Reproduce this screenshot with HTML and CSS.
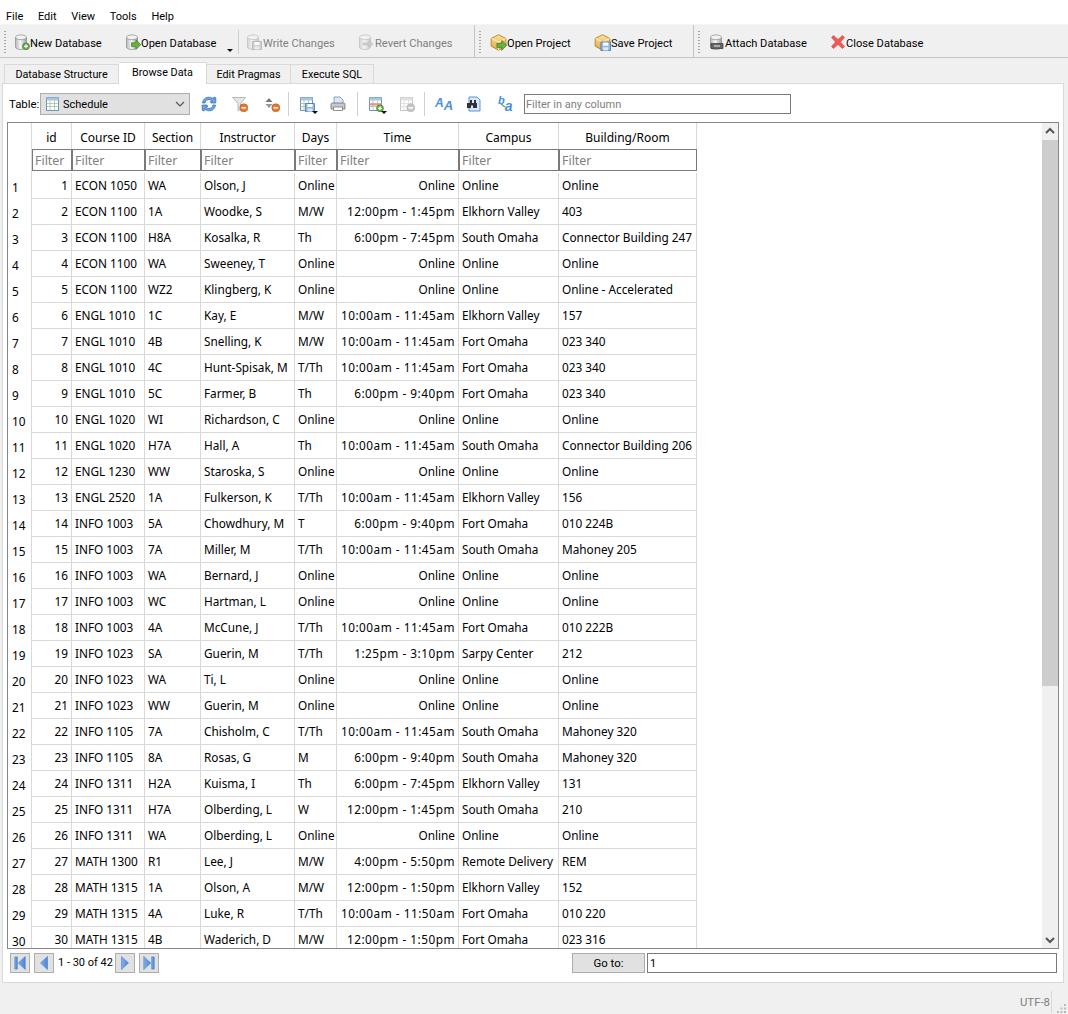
FILE: index.html
```html
<!DOCTYPE html>
<html lang="en">
<head>
    <meta charset="UTF-8">
    <meta name="viewport" content="width=device-width, initial-scale=1.0">
    <title>DB Browser for SQLite</title>
    <link rel="stylesheet" href="styles.css">
</head>
<body>
    <svg class="sprite" aria-hidden="true">
        <defs>
            <linearGradient id="gDb" x1="0" x2="1" y1="0" y2="0"><stop offset="0" stop-color="#b9b9b9"/><stop offset=".45" stop-color="#f7f7f7"/><stop offset="1" stop-color="#9c9c9c"/></linearGradient>
            <linearGradient id="gBox" x1="0" x2="0" y1="0" y2="1"><stop offset="0" stop-color="#fbe39a"/><stop offset="1" stop-color="#e2a93f"/></linearGradient>
            <linearGradient id="gBlue" x1="0" x2="1" y1="0" y2="0"><stop offset="0" stop-color="#7fb0ec"/><stop offset="1" stop-color="#4a86dc"/></linearGradient>
            <symbol id="db" viewBox="0 0 16 16">
                <path d="M1.500 3.500v9.500c0 1.400 2.500 2.500 5.500 2.500s5.500-1.100 5.500-2.500V3.500z" fill="url(#gDb)" stroke="#8a8a8a" stroke-width=".7"/>
                <ellipse cx="7" cy="3.300" rx="5.500" ry="2.400" fill="#f2f2f2" stroke="#8a8a8a" stroke-width=".7"/>
            </symbol>
            <symbol id="plus-badge" viewBox="0 0 16 16">
                <circle cx="12" cy="12.300" r="3.400" fill="#62ad3f" stroke="#3f7d28" stroke-width=".7"/>
                <path d="M10 12.300h4M12 10.300v4" stroke="#fff" stroke-width="1.200"/>
            </symbol>
            <symbol id="minus-badge" viewBox="0 0 16 16">
                <circle cx="11.800" cy="11.800" r="4" fill="#e8792b" stroke="#b9531a" stroke-width=".6"/>
                <path d="M9.500 11.800h4.600" stroke="#fff" stroke-width="1.500"/>
            </symbol>
            <symbol id="arrow-badge" viewBox="0 0 16 16">
                <path d="M6.500 8.800h4.500V6l4.800 4.600L11 15.400v-2.800H6.500z" fill="#69b23f" stroke="#3f7d28" stroke-width=".7"/>
            </symbol>
            <symbol id="floppy" viewBox="0 0 16 16">
                <path d="M6.500 7.500h9v8h-9z" fill="#8fb7e6" stroke="#4a76ad" stroke-width=".8"/>
                <path d="M8.500 8h5v3h-5z" fill="#fff"/>
                <path d="M8.500 12.500h5v3h-5z" fill="#dfe8f2"/>
            </symbol>
            <symbol id="cube" viewBox="0 0 17 17">
                <path d="M8.500 .8L15.800 4.400V12.200L8.500 16.200L1.200 12.200V4.400z" fill="url(#gBox)" stroke="#b98a35"/>
                <path d="M1.500 4.500L8.500 8l7-3.500M8.500 8v8" fill="none" stroke="#fff3c9" stroke-width=".9"/>
            </symbol>
            <symbol id="grid" viewBox="0 0 16 16">
                <path d="M1.500 1.500h12v13h-12z" fill="#fff" stroke="#6e8fb8"/>
                <path d="M1.500 1.500h12v3h-12z" fill="#a9c5e6"/>
                <path d="M5 4.500v10M9.500 4.500v10M1.500 7.500h12M1.500 10.500h12" stroke="#9fc39a" stroke-width=".8"/>
            </symbol>
            <symbol id="first" viewBox="0 0 16 18">
                <path d="M2 2h3v14H2z" fill="url(#gBlue)" stroke="#3f78c8" stroke-width=".6"/>
                <path d="M14 1.500v15L6 9z" fill="url(#gBlue)" stroke="#3f78c8" stroke-width=".6"/>
            </symbol>
            <symbol id="prev" viewBox="0 0 16 18">
                <path d="M12 1.500v15L4 9z" fill="url(#gBlue)" stroke="#3f78c8" stroke-width=".6"/>
            </symbol>
            <symbol id="next" viewBox="0 0 16 18">
                <path d="M4 1.500v15L12 9z" fill="url(#gBlue)" stroke="#3f78c8" stroke-width=".6"/>
            </symbol>
            <symbol id="last" viewBox="0 0 16 18">
                <path d="M11 2h3v14h-3z" fill="url(#gBlue)" stroke="#3f78c8" stroke-width=".6"/>
                <path d="M2 1.500v15L10 9z" fill="url(#gBlue)" stroke="#3f78c8" stroke-width=".6"/>
            </symbol>
        </defs>
    </svg>

    <div class="menubar">
        <span>File</span><span>Edit</span><span>View</span><span>Tools</span><span>Help</span>
    </div>

    <div class="toolbar">
        <div class="grip"></div>
        <div class="tool tool-new">
            <svg class="ico"><use href="#db"/><use href="#plus-badge"/></svg><span class="tool-text t-new">New Database</span>
        </div>
        <div class="tool tool-open">
            <svg class="ico"><use href="#db"/><use href="#arrow-badge"/></svg><span class="tool-text t-open">Open Database</span>
        </div>
        <div class="drop drop-open"></div>
        <div class="tb-sep tb-sep-thin"></div>
        <div class="tool tool-write off">
            <svg class="ico"><use href="#db"/><use href="#floppy"/></svg><span class="tool-text t-write">Write Changes</span>
        </div>
        <div class="tool tool-revert off">
            <svg class="ico"><use href="#db"/><path d="M5 9h6V7l4 3-4 3v-2H5z" fill="#aaa" stroke="#888" stroke-width=".6"/></svg><span class="tool-text t-revert">Revert Changes</span>
        </div>
        <div class="tb-sep tb-sep-a"></div>
        <div class="grip grip-b"></div>
        <div class="tool tool-oproj">
            <svg class="ico ico-17"><use href="#cube"/><use href="#arrow-badge"/></svg><span class="tool-text t-oproj">Open Project</span>
        </div>
        <div class="tool tool-sproj">
            <svg class="ico ico-17"><use href="#cube"/><use href="#floppy"/></svg><span class="tool-text t-sproj">Save Project</span>
        </div>
        <div class="tb-sep tb-sep-b"></div>
        <div class="grip grip-b"></div>
        <div class="tool tool-attach">
            <svg class="ico"><use href="#db"/><path d="M2 9.500h12v5H2z" fill="#666" stroke="#333" stroke-width=".7"/><path d="M5 11.500h6v1H5z" fill="#eee"/></svg><span class="tool-text t-attach">Attach Database</span>
        </div>
        <div class="tool tool-close">
            <svg class="ico" viewBox="0 0 16 16"><path d="M1.500 3.500l2-2L8 5.500l4.500-4 2 2L10.500 8l4 4.500-2 2L8 10.500l-4.500 4-2-2L5.500 8z" fill="#ee5a55" stroke="#d23f3a" stroke-width=".6"/></svg><span class="tool-text t-close">Close Database</span>
        </div>
    </div>

    <div class="tabs">
        <div class="tab tab-1">Database Structure</div>
        <div class="tab tab-active">Browse Data</div>
        <div class="tab tab-3">Edit Pragmas</div>
        <div class="tab tab-4">Execute SQL</div>
    </div>

    <div class="pane">
        <div class="table-bar">
            <span class="bar-label">Table:</span>
            <div class="combo">
                <svg class="ico combo-ico"><use href="#grid"/></svg>
                <span class="combo-text">Schedule</span>
                <svg class="combo-arrow" viewBox="0 0 10 6"><path d="M1 1l4 4 4-4" fill="none" stroke="#555" stroke-width="1.200"/></svg>
            </div>
            <svg class="ico b-refresh" viewBox="0 0 16 16"><path d="M1.500 7C2 3 4.800 1.200 8 1.200c2 0 3.700.8 4.800 2V1l2 .8V7h-4.800l-.7-1.700h2.200C11 4.200 9.700 3.500 8 3.500 5.800 3.500 4.400 4.800 4 7zM14.500 9c-.5 4-3.300 5.800-6.500 5.800-2 0-3.700-.8-4.800-2V15l-2-.8V9H6l.7 1.700H4.500C5.500 11.800 6.300 12.500 8 12.500c2.200 0 3.600-1.300 4-3.500z" fill="#6ea6de" stroke="#2a68ad" stroke-width=".7"/></svg>
            <svg class="ico b-filter" viewBox="0 0 16 16"><path d="M.5 1.500h13L8.500 7.500v6L6 15V7.500z" fill="#e6e6e6" stroke="#aaa" stroke-width=".8"/><use href="#minus-badge"/></svg>
            <svg class="ico b-sort" viewBox="0 0 16 16"><path d="M5 2l3.500 4h-7z" fill="#777"/><path d="M1.500 8h7L5 12z" fill="#999"/><use href="#minus-badge"/></svg>
            <div class="bar-sep sep-1"></div>
            <div class="ico-wrap b-save">
                <svg class="ico"><use href="#grid"/><use href="#floppy"/></svg>
                <div class="drop"></div>
            </div>
            <svg class="ico b-print" viewBox="0 0 16 16"><path d="M4 1h6l3 3v4H4z" fill="#dbe8f6" stroke="#6d92bd" stroke-width=".8"/><path d="M1 8.500c0-1 .5-1.500 1.500-1.500h11c1 0 1.500.5 1.500 1.500V13H1z" fill="#c9c9c9" stroke="#6c6c6c" stroke-width=".8"/><path d="M3.500 11h9v3.500h-9z" fill="#fff" stroke="#777" stroke-width=".8"/></svg>
            <div class="bar-sep sep-2"></div>
            <div class="ico-wrap b-add">
                <svg class="ico"><use href="#grid"/><path d="M1.500 7.500h12v2h-12z" fill="#ef8f8f"/><use href="#plus-badge"/></svg>
                <div class="drop"></div>
            </div>
            <svg class="ico b-del off"><use href="#grid"/><use href="#minus-badge"/></svg>
            <div class="bar-sep sep-3"></div>
            <svg class="ico b-font" viewBox="0 0 17 16"><text class="ico-letter" x="0" y="11" font-size="12">A<tspan dy="3" font-size="13">A</tspan></text></svg>
            <svg class="ico b-find" viewBox="0 0 16 16"><path d="M3 1h8l3 3v11H3z" fill="#d8e9fb" stroke="#4f8bcb" stroke-width=".9"/><path d="M1 7h3V4h2v3h2V4h2v3h1v5H7V9.500H5V12H1z" fill="#2f3238"/></svg>
            <svg class="ico b-repl" viewBox="0 0 16 16"><path d="M4 8l4 3" stroke="#5aa544" stroke-width="1.300"/><text class="ico-letter" x="1" y="8" font-size="11">b<tspan dy="7" font-size="14">a</tspan></text></svg>
            <input class="global-filter" type="text" placeholder="Filter in any column">
        </div>

        <div class="grid-frame">
            <div class="grid-view">
                <table class="grid">
                    <colgroup>
                        <col class="c-head"><col class="c-id"><col class="c-course"><col class="c-section"><col class="c-instr"><col class="c-days"><col class="c-time"><col class="c-campus"><col class="c-room">
                    </colgroup>
                    <thead>
                        <tr class="titles">
                            <th></th><th>id</th><th>Course ID</th><th>Section</th><th>Instructor</th><th>Days</th><th>Time</th><th>Campus</th><th>Building/Room</th>
                        </tr>
                        <tr class="filters">
                            <th></th>
                            <td><input type="text" placeholder="Filter"></td>
                            <td><input type="text" placeholder="Filter"></td>
                            <td><input type="text" placeholder="Filter"></td>
                            <td><input type="text" placeholder="Filter"></td>
                            <td><input type="text" placeholder="Filter"></td>
                            <td><input type="text" placeholder="Filter"></td>
                            <td><input type="text" placeholder="Filter"></td>
                            <td><input type="text" placeholder="Filter"></td>
                        </tr>
                    </thead>
                    <tbody>
                        <tr><th>1</th><td class="r">1</td><td>ECON 1050</td><td>WA</td><td>Olson, J</td><td>Online</td><td class="r">Online</td><td>Online</td><td>Online</td></tr>
                        <tr><th>2</th><td class="r">2</td><td>ECON 1100</td><td>1A</td><td>Woodke, S</td><td>M/W</td><td class="t">12:00pm - 1:45pm</td><td>Elkhorn Valley</td><td>403</td></tr>
                        <tr><th>3</th><td class="r">3</td><td>ECON 1100</td><td>H8A</td><td>Kosalka, R</td><td>Th</td><td class="t">6:00pm - 7:45pm</td><td>South Omaha</td><td>Connector Building 247</td></tr>
                        <tr><th>4</th><td class="r">4</td><td>ECON 1100</td><td>WA</td><td>Sweeney, T</td><td>Online</td><td class="r">Online</td><td>Online</td><td>Online</td></tr>
                        <tr><th>5</th><td class="r">5</td><td>ECON 1100</td><td>WZ2</td><td>Klingberg, K</td><td>Online</td><td class="r">Online</td><td>Online</td><td>Online - Accelerated</td></tr>
                        <tr><th>6</th><td class="r">6</td><td>ENGL 1010</td><td>1C</td><td>Kay, E</td><td>M/W</td><td class="t">10:00am - 11:45am</td><td>Elkhorn Valley</td><td>157</td></tr>
                        <tr><th>7</th><td class="r">7</td><td>ENGL 1010</td><td>4B</td><td>Snelling, K</td><td>M/W</td><td class="t">10:00am - 11:45am</td><td>Fort Omaha</td><td>023 340</td></tr>
                        <tr><th>8</th><td class="r">8</td><td>ENGL 1010</td><td>4C</td><td>Hunt-Spisak, M</td><td>T/Th</td><td class="t">10:00am - 11:45am</td><td>Fort Omaha</td><td>023 340</td></tr>
                        <tr><th>9</th><td class="r">9</td><td>ENGL 1010</td><td>5C</td><td>Farmer, B</td><td>Th</td><td class="t">6:00pm - 9:40pm</td><td>Fort Omaha</td><td>023 340</td></tr>
                        <tr><th>10</th><td class="r">10</td><td>ENGL 1020</td><td>WI</td><td>Richardson, C</td><td>Online</td><td class="r">Online</td><td>Online</td><td>Online</td></tr>
                        <tr><th>11</th><td class="r">11</td><td>ENGL 1020</td><td>H7A</td><td>Hall, A</td><td>Th</td><td class="t">10:00am - 11:45am</td><td>South Omaha</td><td>Connector Building 206</td></tr>
                        <tr><th>12</th><td class="r">12</td><td>ENGL 1230</td><td>WW</td><td>Staroska, S</td><td>Online</td><td class="r">Online</td><td>Online</td><td>Online</td></tr>
                        <tr><th>13</th><td class="r">13</td><td>ENGL 2520</td><td>1A</td><td>Fulkerson, K</td><td>T/Th</td><td class="t">10:00am - 11:45am</td><td>Elkhorn Valley</td><td>156</td></tr>
                        <tr><th>14</th><td class="r">14</td><td>INFO 1003</td><td>5A</td><td>Chowdhury, M</td><td>T</td><td class="t">6:00pm - 9:40pm</td><td>Fort Omaha</td><td>010 224B</td></tr>
                        <tr><th>15</th><td class="r">15</td><td>INFO 1003</td><td>7A</td><td>Miller, M</td><td>T/Th</td><td class="t">10:00am - 11:45am</td><td>South Omaha</td><td>Mahoney 205</td></tr>
                        <tr><th>16</th><td class="r">16</td><td>INFO 1003</td><td>WA</td><td>Bernard, J</td><td>Online</td><td class="r">Online</td><td>Online</td><td>Online</td></tr>
                        <tr><th>17</th><td class="r">17</td><td>INFO 1003</td><td>WC</td><td>Hartman, L</td><td>Online</td><td class="r">Online</td><td>Online</td><td>Online</td></tr>
                        <tr><th>18</th><td class="r">18</td><td>INFO 1003</td><td>4A</td><td>McCune, J</td><td>T/Th</td><td class="t">10:00am - 11:45am</td><td>Fort Omaha</td><td>010 222B</td></tr>
                        <tr><th>19</th><td class="r">19</td><td>INFO 1023</td><td>SA</td><td>Guerin, M</td><td>T/Th</td><td class="t">1:25pm - 3:10pm</td><td>Sarpy Center</td><td>212</td></tr>
                        <tr><th>20</th><td class="r">20</td><td>INFO 1023</td><td>WA</td><td>Ti, L</td><td>Online</td><td class="r">Online</td><td>Online</td><td>Online</td></tr>
                        <tr><th>21</th><td class="r">21</td><td>INFO 1023</td><td>WW</td><td>Guerin, M</td><td>Online</td><td class="r">Online</td><td>Online</td><td>Online</td></tr>
                        <tr><th>22</th><td class="r">22</td><td>INFO 1105</td><td>7A</td><td>Chisholm, C</td><td>T/Th</td><td class="t">10:00am - 11:45am</td><td>South Omaha</td><td>Mahoney 320</td></tr>
                        <tr><th>23</th><td class="r">23</td><td>INFO 1105</td><td>8A</td><td>Rosas, G</td><td>M</td><td class="t">6:00pm - 9:40pm</td><td>South Omaha</td><td>Mahoney 320</td></tr>
                        <tr><th>24</th><td class="r">24</td><td>INFO 1311</td><td>H2A</td><td>Kuisma, I</td><td>Th</td><td class="t">6:00pm - 7:45pm</td><td>Elkhorn Valley</td><td>131</td></tr>
                        <tr><th>25</th><td class="r">25</td><td>INFO 1311</td><td>H7A</td><td>Olberding, L</td><td>W</td><td class="t">12:00pm - 1:45pm</td><td>South Omaha</td><td>210</td></tr>
                        <tr><th>26</th><td class="r">26</td><td>INFO 1311</td><td>WA</td><td>Olberding, L</td><td>Online</td><td class="r">Online</td><td>Online</td><td>Online</td></tr>
                        <tr><th>27</th><td class="r">27</td><td>MATH 1300</td><td>R1</td><td>Lee, J</td><td>M/W</td><td class="t">4:00pm - 5:50pm</td><td>Remote Delivery</td><td>REM</td></tr>
                        <tr><th>28</th><td class="r">28</td><td>MATH 1315</td><td>1A</td><td>Olson, A</td><td>M/W</td><td class="t">12:00pm - 1:50pm</td><td>Elkhorn Valley</td><td>152</td></tr>
                        <tr><th>29</th><td class="r">29</td><td>MATH 1315</td><td>4A</td><td>Luke, R</td><td>T/Th</td><td class="t">10:00am - 11:50am</td><td>Fort Omaha</td><td>010 220</td></tr>
                        <tr><th>30</th><td class="r">30</td><td>MATH 1315</td><td>4B</td><td>Waderich, D</td><td>M/W</td><td class="t">12:00pm - 1:50pm</td><td>Fort Omaha</td><td>023 316</td></tr>
                    </tbody>
                </table>
            </div>
            <div class="vscroll">
                <svg class="vs-arrow" viewBox="0 0 16 17"><path d="M4 10l4-4 4 4" fill="none" stroke="#555" stroke-width="2"/></svg>
                <div class="vs-thumb"></div>
                <div class="vs-rest"></div>
                <svg class="vs-arrow" viewBox="0 0 16 17"><path d="M4 7l4 4 4-4" fill="none" stroke="#555" stroke-width="2"/></svg>
            </div>
        </div>

        <div class="pager">
            <button class="nav-btn"><svg class="nav-ico"><use href="#first"/></svg></button>
            <button class="nav-btn nav-gap"><svg class="nav-ico"><use href="#prev"/></svg></button>
            <span class="page-info">1 - 30 of 42</span>
            <button class="nav-btn"><svg class="nav-ico"><use href="#next"/></svg></button>
            <button class="nav-btn nav-gap"><svg class="nav-ico"><use href="#last"/></svg></button>
            <button class="goto-btn">Go to:</button>
            <input class="goto-input" type="text" value="1">
        </div>
    </div>

    <div class="statusbar">
        <span class="encoding">UTF-8</span>
        <svg class="size-grip" viewBox="0 0 10 10"><path d="M8 1h2v2H8zM8 4.500h2v2H8zM8 8h2v2H8zM4.500 4.500h2v2h-2zM4.500 8h2v2h-2zM1 8h2v2H1z" fill="#bbb"/></svg>
    </div>
</body>
</html>
```

FILE: styles.css
```css
html, body {
  height: 100%;
  margin: 0;
}

body {
  display: flex;
  flex-direction: column;
  background-color: #f0f0f0;
  color: #000;
  font-family: Roboto, sans-serif;
  font-size: 11px;
  overflow: hidden;
}

.sprite {
  display: block;
  width: 0;
  height: 0;
  flex: none;
}

.menubar {
  height: 25px;
  background-color: #fff;
  display: flex;
  align-items: flex-end;
  padding-left: 6px;
  gap: 14.700px;
  line-height: 15px;
  box-sizing: border-box;
  border-bottom: 1px solid #f5f5f5;
}

.toolbar {
  height: 33px;
  box-sizing: border-box;
  display: flex;
  align-items: center;
  border-bottom: 1px solid #c4c4c4;
  padding: 2px 0 0 4px;
  background-color: #f0f0f0;
  font-size: 11.100px;
}

.grip {
  width: 2px;
  height: 25px;
  flex: none;
  background-image: radial-gradient(#a5a5a5 40%, transparent 45%);
  background-size: 2px 3px;
}

.grip-b {
  margin-left: 4px;
}

.tool {
  display: flex;
  align-items: center;
  white-space: nowrap;
}

.tool-text {
  margin-top: 2px;
}

.tool.off {
  color: #808080;
}

.tool.off .ico, .ico.off {
  filter: grayscale(1) opacity(.5);
}

.ico {
  width: 16px;
  height: 16px;
  flex: none;
  display: block;
  overflow: visible;
}

.ico-17 {
  width: 17px;
  height: 17px;
}

.t-new { width: 71px; }
.t-open { width: 75px; }
.t-write { width: 72px; }
.t-revert { width: 79px; }
.t-oproj { width: 64px; }
.t-sproj { width: 62px; }
.t-attach { width: 80px; }
.t-close { width: 75px; }

.tool-new { margin-left: 8px; }
.tool-open { margin-left: 24px; }
.tool-write { margin-left: 7px; }
.tool-write .ico { margin-right: 1px; }
.tool-revert { margin-left: 23px; }
.tool-revert .ico { margin-right: 1px; }
.tool-oproj { margin-left: 9px; }
.tool-sproj { margin-left: 23px; }
.tool-attach { margin-left: 9px; }
.tool-close { margin-left: 25px; }

.drop {
  width: 0;
  height: 0;
  flex: none;
  border-left: 3px solid transparent;
  border-right: 3px solid transparent;
  border-top: 3px solid #111;
}

.drop-open {
  margin: 17px 0 0 11px;
}

.tb-sep {
  width: 1px;
  height: 32px;
  flex: none;
  background-color: #c4c4c4;
  margin-top: -2px;
}

.tb-sep-thin { margin-left: 5px; background-color: #cfcfcf; height: 24px; margin-top: 0; }
.tb-sep-a { margin-left: 20px; }
.tb-sep-b { margin-left: 20px; }

.tabs {
  height: 25px;
  display: flex;
  align-items: flex-end;
  padding-left: 4px;
  position: relative;
  z-index: 1;
  font-size: 10.800px;
}

.tab {
  height: 19px;
  box-sizing: border-box;
  border: 1px solid #d9d9d9;
  border-bottom: none;
  border-left: none;
  text-align: center;
  line-height: 19px;
}

.tab-1 { width: 115px; border-left: 1px solid #d9d9d9; }
.tab-3 { width: 84px; }
.tab-4 { width: 83px; }

.tab-active {
  width: 88px;
  height: 22px;
  background-color: #fff;
  line-height: 20px;
  margin-bottom: -1px;
}

.pane {
  height: 900px;
  box-sizing: border-box;
  margin: 0 4px 0 2px;
  background-color: #fff;
  border: 1px solid #d9d9d9;
  display: flex;
  flex-direction: column;
  padding: 0 4px 0 4px;
}

.table-bar {
  height: 38px;
  flex: none;
  box-sizing: border-box;
  display: flex;
  align-items: center;
  padding: 2px 0 0 2px;
}

.bar-label {
  width: 28px;
  flex: none;
  font-size: 11.400px;
}

.combo {
  width: 150px;
  height: 22px;
  flex: none;
  box-sizing: border-box;
  margin-left: 3px;
  background-color: #e1e1e1;
  border: 1px solid #adadad;
  display: flex;
  align-items: center;
  padding: 0 4px;
}

.combo-text {
  margin-left: 2px;
  flex: 1;
}

.combo-arrow {
  width: 10px;
  height: 6px;
}

.b-refresh { margin-left: 11px; }
.b-filter { margin-left: 15px; }
.b-sort { margin-left: 16px; }
.sep-1 { margin-left: 8px; }
.b-save { margin-left: 10px; }
.b-print { margin-left: 12px; }
.sep-2 { margin-left: 11px; }
.b-add { margin-left: 10px; }
.b-del { margin-left: 12px; }
.sep-3 { margin-left: 9px; }
.b-font { margin-left: 10px; width: 17px; }
.b-find { margin-left: 14px; }
.b-repl { margin-left: 15px; }

.bar-sep {
  width: 1px;
  height: 24px;
  flex: none;
  background-color: #d0d0d0;
}

.ico-wrap {
  display: flex;
  align-items: flex-end;
  width: 19px;
  flex: none;
}

.ico-wrap .drop {
  margin-left: -3px;
  margin-bottom: -2px;
}

.ico-letter {
  font-family: "Liberation Sans", sans-serif;
  font-weight: bold;
  font-style: italic;
  fill: #4a8ede;
}

.global-filter {
  width: 267px;
  height: 20px;
  flex: none;
  box-sizing: border-box;
  margin-left: 11px;
  border: 1px solid #7a7a7a;
  padding: 0 1px;
  font: inherit;
}

input::placeholder {
  color: #808080;
  opacity: 1;
}

.grid-frame {
  height: 827px;
  flex: none;
  box-sizing: border-box;
  border: 1px solid #828790;
  display: flex;
}

.grid-view {
  flex: 1;
  overflow: hidden;
}

.grid {
  table-layout: fixed;
  border-collapse: separate;
  border-spacing: 0;
  width: 689px;
  font-family: "Noto Sans", sans-serif;
  font-size: 11.800px;
}

.c-head { width: 24px; }
.c-id { width: 40px; }
.c-course { width: 73px; }
.c-section { width: 56px; }
.c-instr { width: 94px; }
.c-days { width: 42px; }
.c-time { width: 122px; }
.c-campus { width: 100px; }
.c-room { width: 138px; }

.grid th, .grid td {
  height: 26px;
  box-sizing: border-box;
  padding: 0 3px 1px;
  border-right: 1px solid #d9d9d9;
  border-bottom: 1px solid #d9d9d9;
  font-weight: normal;
  white-space: nowrap;
  overflow: hidden;
}

.grid tbody th, .grid thead th:first-child {
  border-bottom: none;
  text-align: left;
  padding: 2px 0 0 4px;
}

.grid td.r {
  text-align: right;
}

.grid td.t {
  text-align: right;
  letter-spacing: .5px;
}

.titles th {
  text-align: center;
  font-size: 12px;
  padding: 2px 3px 0;
}

.titles th:not(:first-child) {
  border-bottom: none;
}

.filters th, .filters td {
  height: 24px;
  padding: 0 0 2px 0;
  vertical-align: top;
  border-bottom: none;
}

.filters td {
  border-right: none;
  padding-right: 0;
}

.filters input {
  display: block;
  width: 100%;
  height: 22px;
  box-sizing: border-box;
  border: 1px solid #7a7a7a;
  padding: 0 2px;
  font: inherit;
  font-size: 12.400px;
}

.vscroll {
  width: 16px;
  flex: none;
  background-color: #f0f0f0;
  display: flex;
  flex-direction: column;
}

.vs-arrow {
  width: 16px;
  height: 17px;
  flex: none;
}

.vs-thumb {
  height: 546px;
  flex: none;
  background-color: #cdcdcd;
}

.vs-rest {
  flex: 1;
}

.pager {
  height: 33px;
  flex: none;
  display: flex;
  align-items: flex-start;
  padding: 4px 2px 0 3px;
  box-sizing: border-box;
}

.nav-btn {
  width: 20px;
  height: 20px;
  flex: none;
  padding: 0;
  box-sizing: border-box;
  background-color: #e1e1e1;
  border: 1px solid #adadad;
  display: flex;
  align-items: center;
  justify-content: center;
}

.nav-gap {
  margin-left: 4px;
}

.nav-ico {
  width: 14px;
  height: 16px;
}

.page-info {
  margin-left: 4px;
  width: 57px;
  line-height: 20px;
  white-space: nowrap;
}

.goto-btn {
  width: 73px;
  height: 20px;
  padding: 0;
  box-sizing: border-box;
  margin-left: auto;
  background-color: #e1e1e1;
  border: 1px solid #adadad;
  font: inherit;
  font-size: 11.400px;
}

.goto-input {
  width: 410px;
  height: 20px;
  box-sizing: border-box;
  margin-left: 2px;
  border: 1px solid #7a7a7a;
  padding: 0 2px;
  font: inherit;
}

.statusbar {
  flex: 1;
  display: flex;
  justify-content: flex-end;
  align-items: center;
  padding-right: 1px;
  padding-top: 6px;
  font-size: 11.400px;
}

.encoding {
  color: #808080;
  padding-right: 1px;
  border-right: 1px solid #d9d9d9;
  line-height: 22px;
  margin-right: 4px;
}

.size-grip {
  width: 10px;
  height: 10px;
  align-self: flex-end;
  margin: 0 1px 1px 0;
}
```
